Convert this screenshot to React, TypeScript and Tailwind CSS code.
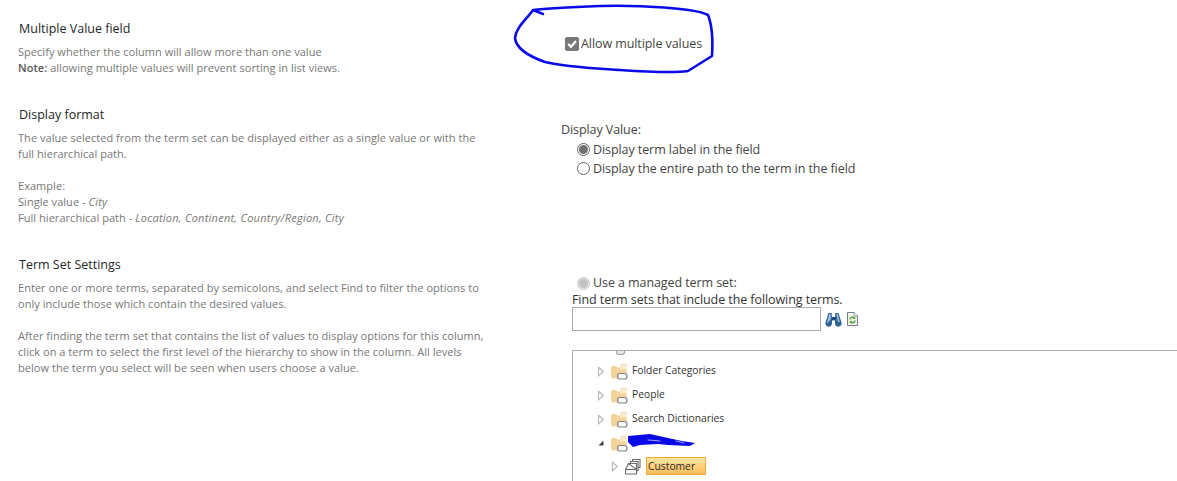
const font = "font-['Open_Sans','Liberation_Sans',sans-serif]";

function Section({ title, height, children, right }: { title: string; height: string; children: React.ReactNode; right: React.ReactNode }) {
  return (
    <div className={`flex ${height}`}>
      <div className="w-[561px] shrink-0 pl-[18px]">
        <h3 className="pl-px text-[12.5px] leading-[18px] text-[#262626]">{title}</h3>
        <div className="mt-[6px] w-[470px] text-[11px] leading-[16px] tracking-[0.04px] text-[#777777]">{children}</div>
      </div>
      <div className="min-w-0 flex-1">{right}</div>
    </div>
  );
}

function Radio({ checked, disabled }: { checked?: boolean; disabled?: boolean }) {
  return (
    <span className={`flex h-[13px] w-[13px] shrink-0 items-center justify-center rounded-full border ${disabled ? "border-[#c8c8c8] bg-[#e4e4e4]" : "border-[#666666] bg-white"}`}>
      {checked && <span className={`h-[9px] w-[9px] rounded-full ${disabled ? "bg-[#c4c4c4]" : "bg-[#707070]"}`} />}
    </span>
  );
}

function FolderIcon() {
  return (
    <svg width="17" height="17" viewBox="0 0 17 17" className="shrink-0">
      <path d="M0 4.500Q0 3 1.500 3H5l1.500 1.500H9V2L15 .5h.5V10H15v5.500H1.500Q0 15.500 0 14z" fill="#f3d39c" />
      <path d="M9 2.500 15 1v5.500H9z" fill="#fbeacb" />
      <rect x="6.500" y="10.500" width="9.500" height="5.500" rx="2.500" fill="#fff" stroke="#808080" strokeWidth="1.200" />
    </svg>
  );
}

function TermSetIcon() {
  return (
    <svg width="16" height="17" viewBox="0 0 16 17" className="shrink-0" fill="#fff" stroke="#6a6a6a" strokeWidth="1.100">
      <path d="M7.500 1.500h7.500v8h-7.500z" />
      <path d="M5.500 3.500h7.500v9h-7.500z" />
      <path d="M3.500 5.500h8v9h-8z" />
      <path d="M3.500 5.500.5 11.500v4.500h11v-4.500z" />
      <path d="M.5 11.500h11" />
    </svg>
  );
}

function Arrow({ open }: { open?: boolean }) {
  if (open) {
    return (
      <svg width="8" height="8" viewBox="0 0 8 8" className="shrink-0">
        <path d="M6.500 1.500v5h-5z" fill="#444" />
      </svg>
    );
  }
  return (
    <svg width="8" height="11" viewBox="0 0 8 11" className="shrink-0" fill="none" stroke="#b8b8b8" strokeWidth="1.200">
      <path d="M1.500 1.300 6.300 5.500 1.500 9.700z" />
    </svg>
  );
}

function TreeRow({ label, open }: { label?: string; open?: boolean }) {
  return (
    <div className="flex h-6 items-center pl-[24px]">
      <span className="flex w-[14px] justify-start"><Arrow open={open} /></span>
      <FolderIcon />
      {label && <span className="ml-[4px] text-[10.300px] text-[#333333]">{label}</span>}
    </div>
  );
}

function Binoculars() {
  return (
    <svg width="17" height="15" viewBox="0 0 17 15" className="ml-[4px] shrink-0">
      <path d="M3.500 1h3.300v4h3.400V1h3.300l3 9.500a3.300 3.300 0 0 1-6.500 1.500V8.500H7V12a3.300 3.300 0 0 1-6.500-1.500z" fill="#2f6297" />
      <path d="M4.300 2h1.400v5l-3 4H2zM11.300 2h1.400l2 8h-1.500z" fill="#a9c8e4" />
      <path d="M7 5.500h3v2H7z" fill="#163c66" />
    </svg>
  );
}

function RefreshDoc() {
  return (
    <svg width="11" height="14" viewBox="0 0 11 14" className="ml-[5px] shrink-0">
      <path d="M.5.500h6.500l3.500 3.500v9.500H.500z" fill="#f5f3e4" stroke="#6f7f9a" />
      <path d="M7 .5V4h3.500" fill="#fff" stroke="#6f7f9a" strokeWidth=".8" />
      <path d="M3 7.500a2.500 2.500 0 0 1 4.300-1.500M8 8.500a2.500 2.500 0 0 1-4.300 1.500" fill="none" stroke="#45a33f" strokeWidth="1.400" />
      <path d="M8.300 4.500v2.500H5.800zM2.700 11.500V9h2.500z" fill="#45a33f" />
    </svg>
  );
}

export default function App() {
  return (
    <div className={`relative h-[481px] w-[1177px] overflow-hidden bg-white pt-5 ${font}`}>
      <Section
        title="Multiple Value field"
        height="h-[86px]"
        right={
          <div className="flex items-center pl-[4px] pt-[15px] text-[12.500px] leading-[18px] tracking-[-0.08px] text-[#444444]">
            <span className="flex h-[14px] w-[14px] items-center justify-center rounded-[2px] bg-[#787878]">
              <svg width="12" height="12" viewBox="0 0 12 12" fill="none" stroke="#fff" strokeWidth="2.200"><path d="M2.200 6 5 8.800 10 3" /></svg>
            </span>
            <span className="ml-[2px]">Allow multiple values</span>
          </div>
        }
      >
        <p>Specify whether the column will allow more than one value</p>
        <p><b className="font-semibold text-[#555555]">Note:</b> allowing multiple values will prevent sorting in list views.</p>
      </Section>

      <Section
        title="Display format"
        height="h-[150px]"
        right={
          <div className="pt-[14px] text-[12.500px] leading-[19px] tracking-[-0.08px] text-[#444444]">
            <div className="h-[20px] leading-[20px]">Display Value:</div>
            <div className="flex items-center gap-[3px] pl-[16px]"><Radio checked /><span>Display term label in the field</span></div>
            <div className="flex items-center gap-[3px] pl-[16px]"><Radio /><span>Display the entire path to the term in the field</span></div>
          </div>
        }
      >
        <p>The value selected from the term set can be displayed either as a single value or with the full hierarchical path.</p>
        <p className="mt-[16px]">Example:</p>
        <p>Single value - <i className="tracking-[0.25px]">City</i></p>
        <p>Full hierarchical path - <i className="tracking-[0.25px]">Location, Continent, Country/Region, City</i></p>
      </Section>

      <Section
        title="Term Set Settings"
        height="h-[225px]"
        right={
          <div className="pl-[11px] pt-[18px] text-[12.500px] tracking-[-0.08px] text-[#444444]">
            <div className="flex h-[18px] items-center gap-[3px] pl-[5px]"><Radio checked disabled /><span>Use a managed term set:</span></div>
            <div className="leading-[15px] text-[#333333]">Find term sets that include the following terms.</div>
            <div className="flex items-center">
              <div className="h-[24px] w-[249px] border border-[#ababab] bg-white" />
              <Binoculars />
              <RefreshDoc />
            </div>
            <div className="relative mt-[19px] h-[140px] border-l border-t border-[#ababab] pt-[8px] tracking-normal">
              <div className="absolute left-[43px] top-0 h-[4px] w-[9px] rounded-b-[3px] border border-t-0 border-[#999999] bg-[#e8e8e8]" />
              <TreeRow label="Folder Categories" />
              <TreeRow label="People" />
              <TreeRow label="Search Dictionaries" />
              <TreeRow open />
              <div className="flex h-[22px] items-center pl-[38px]">
                <span className="w-[14px]"><Arrow /></span>
                <TermSetIcon />
                <span className="ml-[5px] h-[18px] w-[60px] border border-[#f5a83a] bg-gradient-to-b from-[#ffe6a0] to-[#fdbd58] px-[1px] text-[10.300px] leading-[16px] text-[#262626]">Customer</span>
              </div>
            </div>
          </div>
        }
      >
        <p>Enter one or more terms, separated by semicolons, and select Find to filter the options to only include those which contain the desired values.</p>
        <p className="mt-[16px]">After finding the term set that contains the list of values to display options for this column, click on a term to select the first level of the hierarchy to show in the column. All levels below the term you select will be seen when users choose a value.</p>
      </Section>

      <svg width="1177" height="481" className="pointer-events-none absolute left-0 top-0" fill="none" stroke="#0a0ae6" strokeLinecap="round" strokeLinejoin="round">
        <path strokeWidth="2.600" d="M543 14 L533 10 C 527 19 516 27 515 38 C 516 48 528 56 545 62 C 565 67 590 68 620 70 C 650 72 675 73 688 71 L 712 56 C 713 40 712 25 708 15 C 695 8 640 5 600 6 C 575 7 550 8 533 10" />
        <path stroke="none" fill="#0a0ae6" d="M628 436 L650 434 L668 438 L682 441 L695 443 L690 446 L668 445 L658 444 L640 445 L633 447 L628 442 Z" />
        <path strokeWidth="1" stroke="#9aa0f0" d="M648 440 L660 441 M676 441 L684 443" />
      </svg>
    </div>
  );
}
